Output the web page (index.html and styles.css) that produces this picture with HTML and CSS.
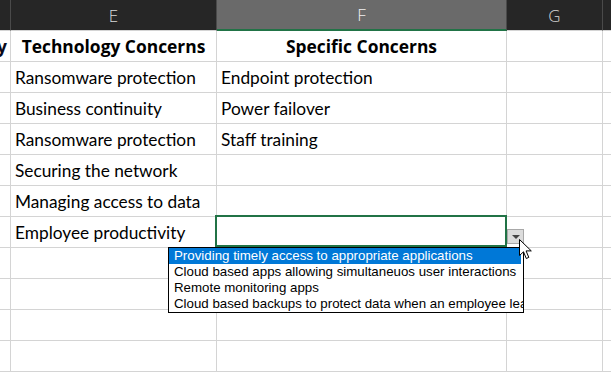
FILE: index.html
```html
<!DOCTYPE html>
<html>
<head>
<meta charset="utf-8">
<link rel="stylesheet" href="styles.css">
</head>
<body>
<div class="sheet">
  <div class="colhead"></div>
  <div class="colhead">E</div>
  <div class="colhead selected">F</div>
  <div class="colhead">G</div>
  <div class="colhead last"></div>

  <div class="cell clip"><span class="tail">y</span></div>
  <div class="cell hdr">Technology Concerns</div>
  <div class="cell hdr">Specific Concerns</div>
  <div class="cell"></div>
  <div class="cell last"></div>

  <div class="cell"></div>
  <div class="cell">Ransomware protection</div>
  <div class="cell">Endpoint protection</div>
  <div class="cell"></div>
  <div class="cell last"></div>

  <div class="cell"></div>
  <div class="cell">Business continuity</div>
  <div class="cell">Power failover</div>
  <div class="cell"></div>
  <div class="cell last"></div>

  <div class="cell"></div>
  <div class="cell">Ransomware protection</div>
  <div class="cell">Staff training</div>
  <div class="cell"></div>
  <div class="cell last"></div>

  <div class="cell"></div>
  <div class="cell">Securing the network</div>
  <div class="cell"></div>
  <div class="cell"></div>
  <div class="cell last"></div>

  <div class="cell"></div>
  <div class="cell">Managing access to data</div>
  <div class="cell"></div>
  <div class="cell"></div>
  <div class="cell last"></div>

  <div class="cell"></div>
  <div class="cell">Employee productivity</div>
  <div class="cell active"></div>
  <div class="cell"></div>
  <div class="cell last"></div>

  <div class="cell"></div><div class="cell"></div><div class="cell"></div><div class="cell"></div><div class="cell last"></div>
  <div class="cell"></div><div class="cell"></div><div class="cell"></div><div class="cell"></div><div class="cell last"></div>
  <div class="cell"></div><div class="cell"></div><div class="cell"></div><div class="cell"></div><div class="cell last"></div>
  <div class="cell"></div><div class="cell"></div><div class="cell"></div><div class="cell"></div><div class="cell last"></div>
</div>

<div class="dd-button"><span class="tri"></span></div>

<ul class="dd-list">
  <li class="on">Providing timely access to appropriate applications</li>
  <li>Cloud based apps allowing simultaneuos user interactions</li>
  <li>Remote monitoring apps</li>
  <li>Cloud based backups to protect data when an employee leaves</li>
</ul>

<svg class="cursor" width="14" height="22" viewBox="0 0 14 22">
  <path d="M0.5 0.5 L0.5 16.5 L4.5 12.8 L7.3 19.5 L9.8 18.4 L7.1 11.9 L12.3 11.9 Z" fill="#ffffff" stroke="#000000" stroke-width="1"/>
</svg>
</body>
</html>
```

FILE: styles.css
```css
html, body {
  margin: 0;
  padding: 0;
  background: #ffffff;
  overflow: hidden;
}
body {
  width: 611px;
  height: 381px;
  position: relative;
}
.sheet {
  display: grid;
  grid-template-columns: 11px 206px 290px 96px 1fr;
  grid-template-rows: 31px repeat(11, 31px);
  width: 611px;
}
.colhead {
  background: #262626;
  color: #d8d8d8;
  font-family: "Open Sans", "Liberation Sans", sans-serif;
  font-weight: 300;
  font-size: 17px;
  display: flex;
  align-items: center;
  justify-content: center;
  border-right: 1px solid #4a4a4a;
  border-bottom: 1px solid #d4d4d4;
  box-sizing: border-box;
}
.colhead.selected {
  background: #6a6a6a;
  color: #f2f2f2;
  border-bottom: 2px solid #217346;
}
.colhead.last {
  border-right: none;
}
.cell {
  border-right: 1px solid #d4d4d4;
  border-bottom: 1px solid #d4d4d4;
  box-sizing: border-box;
  font-family: "Lato", "Open Sans", sans-serif;
  font-size: 17.3px;
  color: #000000;
  display: flex;
  align-items: center;
  padding-left: 4px;
  white-space: nowrap;
  overflow: hidden;
  position: relative;
}
.cell.last {
  border-right: none;
}
.cell.clip {
  padding-left: 0;
  justify-content: flex-end;
}
.tail {
  font-family: "Open Sans", sans-serif;
  font-weight: 700;
  font-size: 17.5px;
  margin-right: 3px;
  color: #0a0a1a;
}
.cell.hdr {
  font-family: "Open Sans", "Liberation Sans", sans-serif;
  font-weight: 700;
  font-size: 17.4px;
  justify-content: center;
  padding-left: 0;
  padding-bottom: 1px;
}
.cell.active {
  overflow: visible;
  z-index: 2;
}
.cell.active::after {
  content: "";
  position: absolute;
  left: -2px;
  top: -2px;
  right: -1px;
  bottom: 0;
  border: 2px solid #217346;
}
.dd-button {
  position: absolute;
  left: 507px;
  top: 229px;
  width: 17px;
  height: 15px;
  box-sizing: border-box;
  background: #dcdcdc;
  border: 1px solid #a8a8a8;
  display: flex;
  align-items: center;
  justify-content: center;
  z-index: 3;
}
.tri {
  width: 0;
  height: 0;
  border-left: 4px solid transparent;
  border-right: 4px solid transparent;
  border-top: 4px solid #444444;
  margin-top: 1px;
}
.dd-list {
  position: absolute;
  left: 168px;
  top: 247px;
  width: 356px;
  height: 66px;
  box-sizing: border-box;
  margin: 0;
  padding: 0;
  list-style: none;
  background: #ffffff;
  border: 1px solid #000000;
  overflow: hidden;
  font-family: "Liberation Sans", "Open Sans", sans-serif;
  font-size: 13.3px;
  z-index: 3;
}
.dd-list li {
  height: 16px;
  line-height: 16px;
  padding-left: 5px;
  white-space: nowrap;
  color: #000000;
}
.dd-list li.on {
  background: #0078d7;
  color: #ffffff;
  margin-right: 2px;
}
.cursor {
  position: absolute;
  left: 519px;
  top: 239px;
  z-index: 4;
}
```
